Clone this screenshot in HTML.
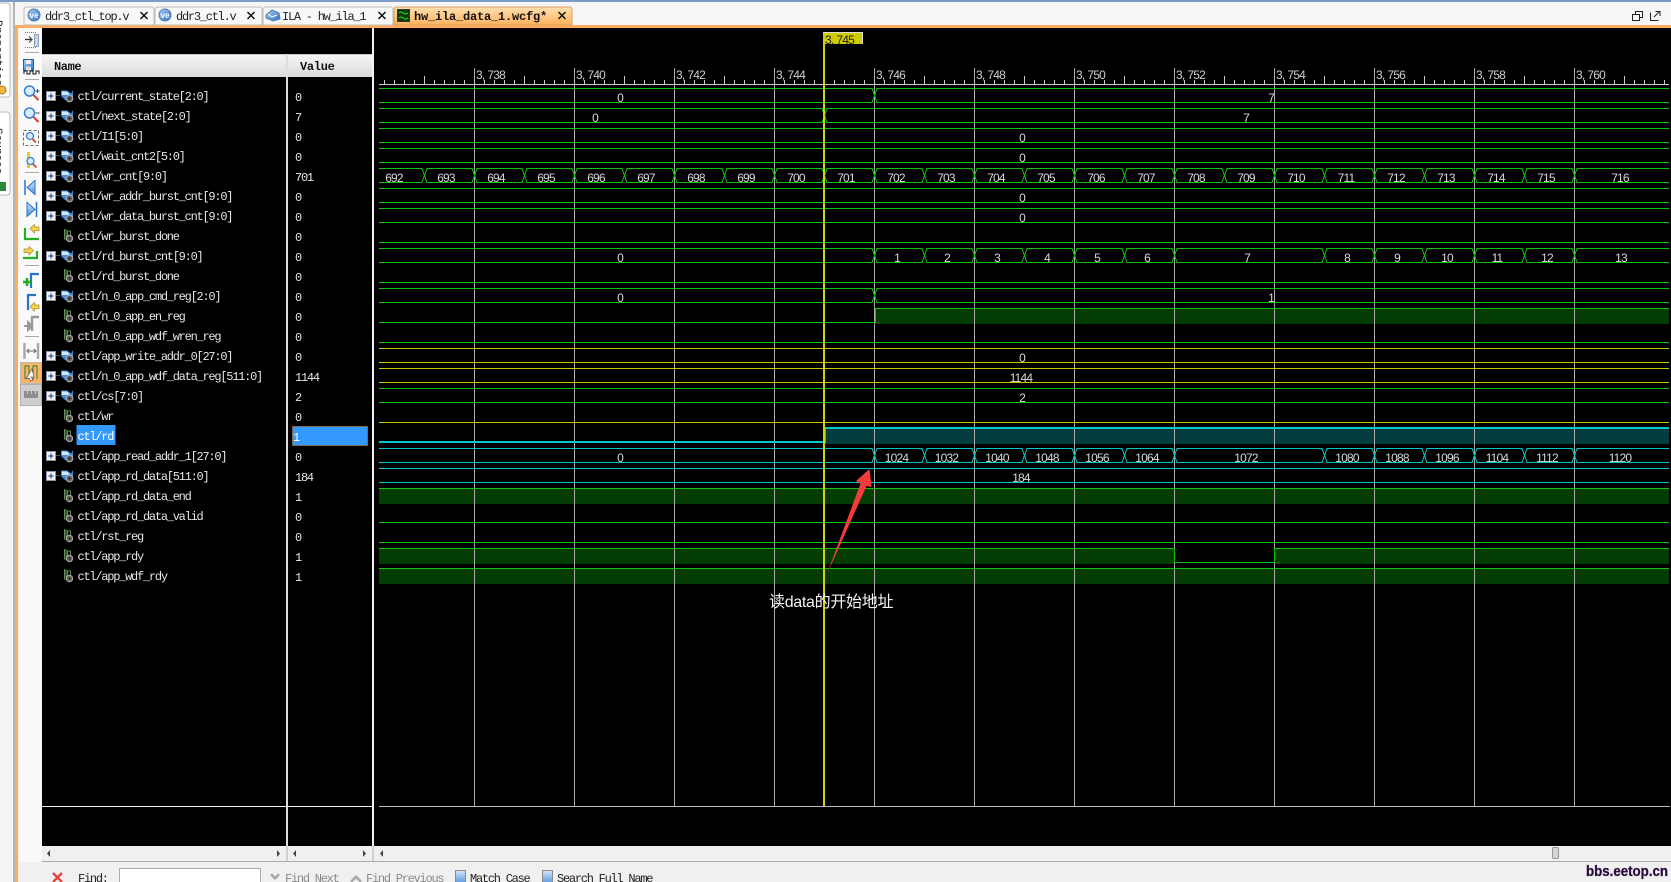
<!DOCTYPE html>
<html><head><meta charset="utf-8"><title>hw_ila_data_1.wcfg</title>
<style>
html,body{margin:0;padding:0;background:#f0f0f0;overflow:hidden;width:1671px;height:882px}
svg{display:block}
text{white-space:pre}
.m{font-family:"Liberation Mono",monospace;font-size:12px;letter-spacing:-1.25px}
.n{fill:#e6e6e6}
.l{font-family:"Liberation Sans",sans-serif;font-size:12px;letter-spacing:-.8px;fill:#d8d8d8;text-anchor:middle}
.r{font-family:"Liberation Sans",sans-serif;font-size:12px;letter-spacing:-.8px;fill:#cfcfcf}
.w{shape-rendering:crispEdges;fill:none}
</style></head><body>
<svg width="1671" height="882" viewBox="0 0 1671 882" xmlns="http://www.w3.org/2000/svg">
<defs>
<linearGradient id="gh" x1="0" y1="0" x2="0" y2="1"><stop offset="0" stop-color="#f7f7f7"/><stop offset="1" stop-color="#dadada"/></linearGradient>
<linearGradient id="ga" x1="0" y1="0" x2="0" y2="1"><stop offset="0" stop-color="#ffe0b0"/><stop offset="1" stop-color="#ffb25e"/></linearGradient>
<linearGradient id="gb" x1="0" y1="0" x2="1" y2="1"><stop offset="0" stop-color="#a9d0f5"/><stop offset="1" stop-color="#2a6fc4"/></linearGradient>
<linearGradient id="gc" x1="0" y1="0" x2="0" y2="1"><stop offset="0" stop-color="#d7e8fa"/><stop offset="1" stop-color="#4d8fd8"/></linearGradient>
<path id="t1" d="M379 .5H872l5 14H1669M379 14.5H872l5-14H1669"/>
<path id="t2" d="M379 .5H822l5 14H1669M379 14.5H822l5-14H1669"/>
<path id="pl" d="M379 .5H1669M379 14.5H1669"/>
<path id="bb" d="M379 .5H872l5 14h45l5-14h45l5 14h45l5-14h45l5 14h45l5-14h45l5 14h145l5-14h45l5 14h45l5-14h45l5 14h45l5-14h45l5 14H1669M379 14.5H872l5-14h45l5 14h45l5-14h45l5 14h45l5-14h45l5 14h45l5-14h145l5 14h45l5-14h45l5 14h45l5-14h45l5 14h45l5-14H1669"/>
<path id="z8" d="M0 .5l5 14h45l5-14h45l5 14h45l5-14h45l5 14h45l5-14h45l5 14h45l5-14h45"/>
<path id="z8b" d="M0 14.5l5-14h45l5 14h45l5-14h45l5 14h45l5-14h45l5 14h45l5-14h45l5 14h45"/>
<g id="pb"><rect x="46.5" y="3.5" width="9" height="9" fill="#eef1f8" stroke="#8a94a6"/><path d="M48.5 8h5M51 5.500v5" stroke="#1c2f7a" fill="none" shape-rendering="crispEdges"/><path d="M56.500 7.500h4" stroke="#999" stroke-dasharray="1 1" fill="none"/></g>
<g id="bus"><path d="M61 2.500h6l4 3 2-3.500v8l-4 2h-4l-4-4z" fill="#3d8ee0"/><path d="M62 3.500h5l3 2.500-3 1h-5z" fill="#cfe8ff"/><circle cx="69.5" cy="10.5" r="3.4" fill="#5f5f5f" stroke="#b0b0b0" stroke-width="1"/><circle cx="69.5" cy="10.5" r="1" fill="#1c1c1c"/></g>
<g id="sc"><path d="M64.5 1v10h3M67.5 11V3h3v4" fill="none" stroke="#5f8f55"/><path d="M66 1.500v8" stroke="#889a80" fill="none"/><circle cx="69.5" cy="10.500" r="3.200" fill="#5f5f5f" stroke="#aaa"/><circle cx="69.500" cy="10.500" r="1" fill="#1c1c1c"/></g>
<g id="ve"><circle cx="0" cy="0" r="6" fill="url(#gb)" stroke="#5a7ea8"/><text x="-4.500" y="3" font-family="Liberation Sans,sans-serif" font-size="8" font-weight="bold" fill="#fff">ve</text></g>
<g id="cl"><path d="M-3.500-3.500l7 7M3.500-3.500l-7 7" stroke="#111" stroke-width="1.500" fill="none"/></g>
<clipPath id="cp"><rect x="823" y="32" width="40" height="12"/></clipPath>
<clipPath id="cs"><rect x="0" y="0" width="12" height="200"/></clipPath>
</defs>

<!-- page chrome -->
<rect width="1671" height="882" fill="#f0f0f0"/>
<rect width="1671" height="25" fill="#f6f6f6"/>
<rect width="1671" height="2" fill="#7d9dc6"/>
<rect x="0" y="25" width="1671" height="3" fill="#ffac5c"/>

<!-- left dock -->
<rect x="0" y="2" width="14" height="880" fill="#f4f4f4"/>
<rect x="13" y="2" width="2" height="880" fill="#b4b4b4"/>
<rect x="15" y="25" width="3" height="857" fill="#ffac5c"/>
<rect x="18" y="28" width="24" height="834" fill="#fafafa"/>
<g clip-path="url(#cs)">
<rect x="-6" y="3" width="16" height="94" rx="3" fill="#fff" stroke="#bbb"/>
<rect x="-6" y="112" width="16" height="83" rx="3" fill="#fff" stroke="#bbb"/>
<text transform="translate(-5,20) rotate(90)" font-family="Liberation Mono,monospace" font-size="11" fill="#222">Properties</text>
<text transform="translate(-5,128) rotate(90)" font-family="Liberation Mono,monospace" font-size="11" fill="#222">Sources</text>
<circle cx="2" cy="90" r="4" fill="#f0b63a" stroke="#a87b1e"/>
<rect x="0" y="182" width="6" height="9" fill="#2d8a3d"/>
</g>

<!-- tabs -->
<path d="M24 25V10q0-3 3-3H151q3 0 3 3V25z" fill="#f8f8f8" stroke="#bdbdbd"/>
<path d="M155 25V10q0-3 3-3H259q3 0 3 3V25z" fill="#f8f8f8" stroke="#bdbdbd"/>
<path d="M263 25V10q0-3 3-3H390q3 0 3 3V25z" fill="#f8f8f8" stroke="#bdbdbd"/>
<path d="M394 25V10q0-3 3-3H569q3 0 3 3V25z" fill="url(#ga)" stroke="#d8a060"/>
<use href="#ve" x="34" y="15"/><use href="#ve" x="165" y="15"/>
<path d="M266 15l6-5 7 3 1 6-7 2-7-3z" fill="url(#gb)" stroke="#5a7ea8"/><path d="M268 14l4 3 5-2" stroke="#fff" fill="none"/>
<rect x="397.500" y="9.500" width="12" height="12" fill="#0a3d0a" stroke="#333"/><path d="M399 13q2-2 4 0t5 0M399 18q2-2 4 0t5 0" stroke="#27e027" fill="none"/>
<text class="m" x="45" y="20" fill="#222">ddr3_ctl_top.v</text>
<text class="m" x="176" y="20" fill="#222">ddr3_ctl.v</text>
<text class="m" x="282" y="20" fill="#222">ILA - hw_ila_1</text>
<text class="m" x="414" y="20" fill="#111" font-weight="bold" style="letter-spacing:-.2px">hw_ila_data_1.wcfg*</text>
<use href="#cl" x="144" y="15.500"/><use href="#cl" x="251" y="15.500"/><use href="#cl" x="382" y="15.500"/><use href="#cl" x="562" y="15.500"/>
<g fill="none" stroke="#222" shape-rendering="crispEdges"><rect x="1632.500" y="14.500" width="7" height="6"/><path d="M1635.500 14.500v-3h7v6h-3"/><path d="M1650.500 12.500v8h8"/></g>
<path d="M1654 17l5-5M1655.500 11.500h4.500v4.500" stroke="#222" fill="none"/>

<!-- main panes -->
<rect x="42" y="28" width="1629" height="818" fill="#000"/>
<rect x="42" y="54" width="244" height="23" fill="url(#gh)"/>
<rect x="288" y="54" width="84" height="23" fill="url(#gh)"/>
<rect x="42" y="54" width="330" height="1" fill="#c8c8c8"/>
<rect x="286" y="54" width="2" height="807" fill="#dedede"/>
<rect x="372" y="28" width="2" height="833" fill="#f4f4f4"/>
<rect x="42" y="806" width="330" height="1" fill="#eee"/>
<text class="m" x="54" y="70" fill="#111" font-weight="bold" style="letter-spacing:-.4px">Name</text>
<text class="m" x="300" y="70" fill="#111" font-weight="bold" style="letter-spacing:-.3px">Value</text>

<!-- tree icons -->
<g>
<use href="#pb" y="88"/><use href="#bus" y="88"/>
<use href="#pb" y="108"/><use href="#bus" y="108"/>
<use href="#pb" y="128"/><use href="#bus" y="128"/>
<use href="#pb" y="148"/><use href="#bus" y="148"/>
<use href="#pb" y="168"/><use href="#bus" y="168"/>
<use href="#pb" y="188"/><use href="#bus" y="188"/>
<use href="#pb" y="208"/><use href="#bus" y="208"/>
<use href="#sc" y="228"/>
<use href="#pb" y="248"/><use href="#bus" y="248"/>
<use href="#sc" y="268"/>
<use href="#pb" y="288"/><use href="#bus" y="288"/>
<use href="#sc" y="308"/>
<use href="#sc" y="328"/>
<use href="#pb" y="348"/><use href="#bus" y="348"/>
<use href="#pb" y="368"/><use href="#bus" y="368"/>
<use href="#pb" y="388"/><use href="#bus" y="388"/>
<use href="#sc" y="408"/>
<use href="#sc" y="428"/>
<use href="#pb" y="448"/><use href="#bus" y="448"/>
<use href="#pb" y="468"/><use href="#bus" y="468"/>
<use href="#sc" y="488"/>
<use href="#sc" y="508"/>
<use href="#sc" y="528"/>
<use href="#sc" y="548"/>
<use href="#sc" y="568"/>
</g>

<!-- selection -->
<rect x="76.500" y="425" width="39" height="20" fill="#3399ff"/>
<rect x="292.500" y="426.500" width="75" height="19" fill="#3399ff" stroke="#e08a30" stroke-dasharray="1 1"/>

<!-- names -->
<g class="m n">
<text x="77.500" y="100">ctl/current_state[2:0]</text>
<text x="77.500" y="120">ctl/next_state[2:0]</text>
<text x="77.500" y="140">ctl/I1[5:0]</text>
<text x="77.500" y="160">ctl/wait_cnt2[5:0]</text>
<text x="77.500" y="180">ctl/wr_cnt[9:0]</text>
<text x="77.500" y="200">ctl/wr_addr_burst_cnt[9:0]</text>
<text x="77.500" y="220">ctl/wr_data_burst_cnt[9:0]</text>
<text x="77.500" y="240">ctl/wr_burst_done</text>
<text x="77.500" y="260">ctl/rd_burst_cnt[9:0]</text>
<text x="77.500" y="280">ctl/rd_burst_done</text>
<text x="77.500" y="300">ctl/n_0_app_cmd_reg[2:0]</text>
<text x="77.500" y="320">ctl/n_0_app_en_reg</text>
<text x="77.500" y="340">ctl/n_0_app_wdf_wren_reg</text>
<text x="77.500" y="360">ctl/app_write_addr_0[27:0]</text>
<text x="77.500" y="380">ctl/n_0_app_wdf_data_reg[511:0]</text>
<text x="77.500" y="400">ctl/cs[7:0]</text>
<text x="77.500" y="420">ctl/wr</text>
<text x="77.500" y="440" fill="#fff">ctl/rd</text>
<text x="77.500" y="460">ctl/app_read_addr_1[27:0]</text>
<text x="77.500" y="480">ctl/app_rd_data[511:0]</text>
<text x="77.500" y="500">ctl/app_rd_data_end</text>
<text x="77.500" y="520">ctl/app_rd_data_valid</text>
<text x="77.500" y="540">ctl/rst_reg</text>
<text x="77.500" y="560">ctl/app_rdy</text>
<text x="77.500" y="580">ctl/app_wdf_rdy</text>
</g>
<!-- values -->
<g class="m n">
<text x="295" y="101">0</text><text x="295" y="121">7</text><text x="295" y="141">0</text><text x="295" y="161">0</text><text x="295" y="181">701</text>
<text x="295" y="201">0</text><text x="295" y="221">0</text><text x="295" y="241">0</text><text x="295" y="261">0</text><text x="295" y="281">0</text>
<text x="295" y="301">0</text><text x="295" y="321">0</text><text x="295" y="341">0</text><text x="295" y="361">0</text><text x="295" y="381">1144</text>
<text x="295" y="401">2</text><text x="295" y="421">0</text><text x="293" y="441" fill="#fff">1</text><text x="295" y="461">0</text><text x="295" y="481">184</text>
<text x="295" y="501">1</text><text x="295" y="521">0</text><text x="295" y="541">0</text><text x="295" y="561">1</text><text x="295" y="581">1</text>
</g>

<!-- fills -->
<g shape-rendering="crispEdges">
<rect x="875" y="309" width="794" height="15" fill="#033d03"/>
<rect x="825" y="429" width="844" height="15" fill="#033d40"/>
<rect x="379" y="489" width="1290" height="15" fill="#033d03"/>
<rect x="379" y="549" width="795" height="15" fill="#033d03"/>
<rect x="1275" y="549" width="394" height="15" fill="#033d03"/>
<rect x="379" y="569" width="1290" height="15" fill="#033d03"/>
</g>

<!-- grid + ruler -->
<g class="w">
<path d="M474.500 68V806M574.500 68V806M674.500 68V806M774.500 68V806M874.500 68V806M974.500 68V806M1074.500 68V806M1174.500 68V806M1274.500 68V806M1374.500 68V806M1474.500 68V806M1574.500 68V806" stroke="#aaa"/>
<path d="M379 84.500H1669" stroke="#ccc"/>
<path d="M384 82H1669" stroke="#ccc" stroke-width="4" stroke-dasharray="1 9"/>
<path d="M424 80H1669" stroke="#ccc" stroke-width="8" stroke-dasharray="1 99"/>
<path d="M379 806.500H1670" stroke="#bbb"/>
</g>
<g class="r">
<text x="476" y="79">3,<tspan dx="3">738</tspan></text>
<text x="576" y="79">3,<tspan dx="3">740</tspan></text>
<text x="676" y="79">3,<tspan dx="3">742</tspan></text>
<text x="776" y="79">3,<tspan dx="3">744</tspan></text>
<text x="876" y="79">3,<tspan dx="3">746</tspan></text>
<text x="976" y="79">3,<tspan dx="3">748</tspan></text>
<text x="1076" y="79">3,<tspan dx="3">750</tspan></text>
<text x="1176" y="79">3,<tspan dx="3">752</tspan></text>
<text x="1276" y="79">3,<tspan dx="3">754</tspan></text>
<text x="1376" y="79">3,<tspan dx="3">756</tspan></text>
<text x="1476" y="79">3,<tspan dx="3">758</tspan></text>
<text x="1576" y="79">3,<tspan dx="3">760</tspan></text>
</g>

<!-- waves -->
<g class="w" stroke="#0cc40c">
<use href="#t1" y="88"/>
<use href="#t2" y="108"/>
<use href="#pl" y="128"/>
<use href="#pl" y="148"/>
<path d="M379 168.500H422M379 182.500H422M1622 168.500H1669M1622 182.500H1669"/>
<use href="#z8" x="422" y="168"/><use href="#z8" x="822" y="168"/><use href="#z8" x="1222" y="168"/>
<use href="#z8b" x="422" y="168"/><use href="#z8b" x="822" y="168"/><use href="#z8b" x="1222" y="168"/>
<use href="#pl" y="188"/>
<use href="#pl" y="208"/>
<path d="M379 242.500H1669M379 282.500H1669M379 342.500H1669M379 522.500H1669M379 542.500H1669"/>
<use href="#bb" y="248"/>
<use href="#t1" y="288"/>
<path d="M379 322.500H875.500V308.500H1669"/>
<use href="#pl" y="388"/>
<path d="M379 488.500H1669M379 548.500H1174.500V562.500H1274.500V548.500H1669M379 568.500H1669"/>
</g>
<g class="w" stroke="#c8c800">
<use href="#pl" y="348"/>
<use href="#pl" y="368"/>
<path d="M379 422.500H1669"/>
</g>
<g class="w" stroke="#00c8c8">
<use href="#bb" y="448"/>
<use href="#pl" y="468"/>
<path d="M379 442H825V428H1669" stroke-width="2"/>
</g>

<!-- wave labels -->
<g class="l">
<text x="620" y="102">0</text><text x="1271" y="102">7</text>
<text x="595" y="122">0</text><text x="1246" y="122">7</text>
<text x="1022" y="142">0</text><text x="1022" y="162">0</text>
<text x="394" y="182">692</text><text x="446" y="182">693</text><text x="496" y="182">694</text><text x="546" y="182">695</text><text x="596" y="182">696</text><text x="646" y="182">697</text><text x="696" y="182">698</text><text x="746" y="182">699</text><text x="796" y="182">700</text><text x="846" y="182">701</text><text x="896" y="182">702</text><text x="946" y="182">703</text><text x="996" y="182">704</text><text x="1046" y="182">705</text><text x="1096" y="182">706</text><text x="1146" y="182">707</text><text x="1196" y="182">708</text><text x="1246" y="182">709</text><text x="1296" y="182">710</text><text x="1346" y="182">711</text><text x="1396" y="182">712</text><text x="1446" y="182">713</text><text x="1496" y="182">714</text><text x="1546" y="182">715</text><text x="1620" y="182">716</text>
<text x="1022" y="202">0</text><text x="1022" y="222">0</text>
<text x="620" y="262">0</text><text x="897" y="262">1</text><text x="947" y="262">2</text><text x="997" y="262">3</text><text x="1047" y="262">4</text><text x="1097" y="262">5</text><text x="1147" y="262">6</text><text x="1247" y="262">7</text><text x="1347" y="262">8</text><text x="1397" y="262">9</text><text x="1447" y="262">10</text><text x="1497" y="262">11</text><text x="1547" y="262">12</text><text x="1621" y="262">13</text>
<text x="620" y="302">0</text><text x="1271" y="302">1</text>
<text x="1022" y="362">0</text><text x="1021" y="382">1144</text><text x="1022" y="402">2</text>
<text x="620" y="462">0</text><text x="896.500" y="462">1024</text><text x="946.500" y="462">1032</text><text x="997" y="462">1040</text><text x="1047" y="462">1048</text><text x="1097" y="462">1056</text><text x="1147" y="462">1064</text><text x="1246" y="462">1072</text><text x="1347" y="462">1080</text><text x="1397" y="462">1088</text><text x="1447" y="462">1096</text><text x="1497" y="462">1104</text><text x="1547" y="462">1112</text><text x="1620" y="462">1120</text>
<text x="1021" y="482">184</text>
</g>

<!-- cursor -->
<g shape-rendering="crispEdges">
<rect x="823" y="44" width="2" height="762" fill="#d4d400"/>
<rect x="823" y="32" width="39" height="12" fill="#cccc00"/>
<path d="M823 32.500H862.500V44" stroke="#ddd" fill="none"/>
</g>
<text clip-path="url(#cp)" x="825" y="44" font-family="Liberation Sans,sans-serif" font-size="12" fill="#222" style="letter-spacing:-.8px">3,<tspan dx="3">745</tspan></text>

<!-- annotation -->
<path d="M827 574L860.500 483.500L856 481L869.500 469L871.500 487L866.500 486Z" fill="#f63b3b"/>
<text x="769" y="607" font-family="'Liberation Sans','Noto Sans CJK SC',sans-serif" font-size="16" fill="#f4f4f4" style="letter-spacing:-.3px">读data的开始地址</text>

<!-- toolbar icons -->
<g fill="none">
<path d="M25 32.500h11M25 47.500h11" stroke="#777" stroke-dasharray="1 1"/>
<path d="M25 39.500h6" stroke="#333" stroke-width="1.300"/><path d="M29 36.500l3 3-3 3" stroke="#333"/>
<rect x="34.500" y="34.500" width="4" height="12" fill="#c7d6e6" stroke="#8da3bb"/>
<path d="M25 52.500h14M25 79.500h14M25 172.500h14M25 265.500h14M25 336.500h14" stroke="#aaa" shape-rendering="crispEdges"/>
<rect x="23.500" y="59.500" width="10" height="11" fill="url(#gb)" stroke="#2a5f9e"/><rect x="26" y="60" width="5" height="4" fill="#eef"/><rect x="26" y="66.500" width="5" height="4" fill="#dde"/>
<path d="M24 74v-3h3v3h3v-3h3v3h3v-3h3v3" stroke="#111"/>
<!-- zoom in -->
<circle cx="29.500" cy="91" r="5" fill="#d8ecff" stroke="#3f7fd0" stroke-width="1.500"/><path d="M33.500 95l5 5" stroke="#d8422a" stroke-width="2"/><path d="M35.500 91h4M37.500 89v4" stroke="#444"/>
<!-- zoom out -->
<circle cx="29.500" cy="113" r="5" fill="#d8ecff" stroke="#3f7fd0" stroke-width="1.500"/><path d="M33.500 117l5 5" stroke="#d8422a" stroke-width="2"/><path d="M35.500 113h4" stroke="#444"/>
<!-- zoom fit -->
<rect x="23.500" y="130.500" width="15" height="15" stroke="#666" stroke-dasharray="3 2"/><circle cx="30" cy="136" r="3.500" fill="#d8ecff" stroke="#3f7fd0" stroke-width="1.300"/><path d="M32.500 139l3.500 3.500" stroke="#d8422a" stroke-width="1.800"/>
<!-- cursor zoom -->
<path d="M28.500 152v16" stroke="#e3cf20" stroke-width="3"/><circle cx="30.500" cy="161" r="3.500" fill="#d8ecff" stroke="#3f7fd0" stroke-width="1.300"/><path d="M33 164l3.500 3.500" stroke="#d8422a" stroke-width="1.800"/>
<!-- first / last -->
<path d="M25 180v15" stroke="#2a74c8" stroke-width="1.500"/><path d="M35 180.500v14l-8-7z" fill="url(#gc)" stroke="#2a74c8"/>
<path d="M36.500 202v15" stroke="#2a74c8" stroke-width="1.500"/><path d="M27 202.500v14l8-7z" fill="url(#gc)" stroke="#2a74c8"/>
<!-- markers -->
<path d="M25 228v11h14" stroke="#23b023" stroke-width="2.200"/><path d="M30 228.500l4.500-4v2.500h4.500v3.500h-4.500v2.500z" fill="#f6d64a" stroke="#a8892a" stroke-width=".7"/>
<path d="M23 258h14v-7" stroke="#23b023" stroke-width="2.200"/><path d="M33.500 250.500l-4.500-4v2.500h-5v3.500h5v2.500z" fill="#f6d64a" stroke="#a8892a" stroke-width=".7"/>
<path d="M31 288v-14h8" stroke="#2a74c8" stroke-width="2.200"/><path d="M23 282h8M27 278v8" stroke="#1fae1f" stroke-width="2.600"/>
<path d="M28 310v-15h8" stroke="#2a74c8" stroke-width="2.200"/><path d="M30 306.500l4.500-4v2.500h4.500v3.500h-4.500v2.500z" fill="#f6d64a" stroke="#a8892a" stroke-width=".7"/>
<path d="M32 331v-14h7" stroke="#999" stroke-width="2.400"/><path d="M24 326h7M28 322l4 4-4 4z" stroke="#999" stroke-width="2" fill="#999"/>
<path d="M24.500 343v16M38 343v16" stroke="#aaa" stroke-width="2.500"/><path d="M27 351h9M29 349l-2 2 2 2M34 349l2 2-2 2" stroke="#666"/>
</g>
<rect x="20.500" y="362.500" width="21" height="21" fill="#ffb36a" stroke="#b8b8b8"/>
<path d="M25 379v-13h4v13M33 380v-14h4v13" fill="none" stroke="#3f8f3f" stroke-width="1.200"/>
<path d="M32 369l-6 10 3-1 2 3 2-1-2-3h3z" fill="#fff" stroke="#444" stroke-width=".6"/>
<rect x="20.500" y="384.500" width="21" height="21" fill="#cfcfcf" stroke="#b0b0b0"/>
<rect x="24" y="391" width="14" height="7" fill="#8f8f8f"/>
<path d="M27.500 391v3M31.500 391v3M35.500 391v3" stroke="#ccc" shape-rendering="crispEdges"/>

<!-- scroll bars -->
<g shape-rendering="crispEdges">
<rect x="42" y="846" width="244" height="15" fill="#f0f0f0"/>
<rect x="288" y="846" width="84" height="15" fill="#f0f0f0"/>
<rect x="374" y="846" width="1297" height="15" fill="#f0f0f0"/>
<rect x="42" y="861" width="1629" height="1" fill="#ababab"/>
<rect x="286" y="846" width="2" height="15" fill="#d0d0d0"/>
<rect x="372" y="846" width="2" height="15" fill="#d0d0d0"/>
</g>
<path d="M50 850v7l-3-3.500zM277 850v7l3-3.500zM296 850v7l-3-3.500zM363 850v7l3-3.500zM383 850v7l-3-3.500z" fill="#444"/>
<rect x="1552.500" y="847.500" width="6" height="11" rx="1" fill="#d4d4d4" stroke="#999"/>

<!-- find bar -->
<path d="M53 873l9 9M62 873l-9 9" stroke="#e8403a" stroke-width="2.300" fill="none"/>
<text class="m" x="78" y="882" fill="#222">Find:</text>
<rect x="119.500" y="868.500" width="141" height="20" fill="#fff" stroke="#a9a9a9"/>
<path d="M270 875l5 5 5-5-2-1.500-3 3-3-3z" fill="#a6a6a6"/>
<text class="m" x="285" y="882" fill="#8a8a8a">Find Next</text>
<path d="M350 881l6-6 6 6-2 1.500-4-4-4 4z" fill="#a6a6a6"/>
<text class="m" x="366" y="882" fill="#8a8a8a">Find Previous</text>
<rect x="455.500" y="870.500" width="10" height="14" fill="url(#gc)" stroke="#8a8a8a"/>
<text class="m" x="470" y="882" fill="#222">Match Case</text>
<rect x="542.500" y="870.500" width="10" height="14" fill="url(#gc)" stroke="#8a8a8a"/>
<text class="m" x="557" y="882" fill="#222">Search Full Name</text>
<text x="1586" y="876" font-family="Liberation Sans,sans-serif" font-weight="bold" font-size="15" fill="#2c0b40" stroke="#2c0b40" stroke-width=".3" textLength="82" lengthAdjust="spacingAndGlyphs">bbs.eetop.cn</text>
</svg>
</body></html>
